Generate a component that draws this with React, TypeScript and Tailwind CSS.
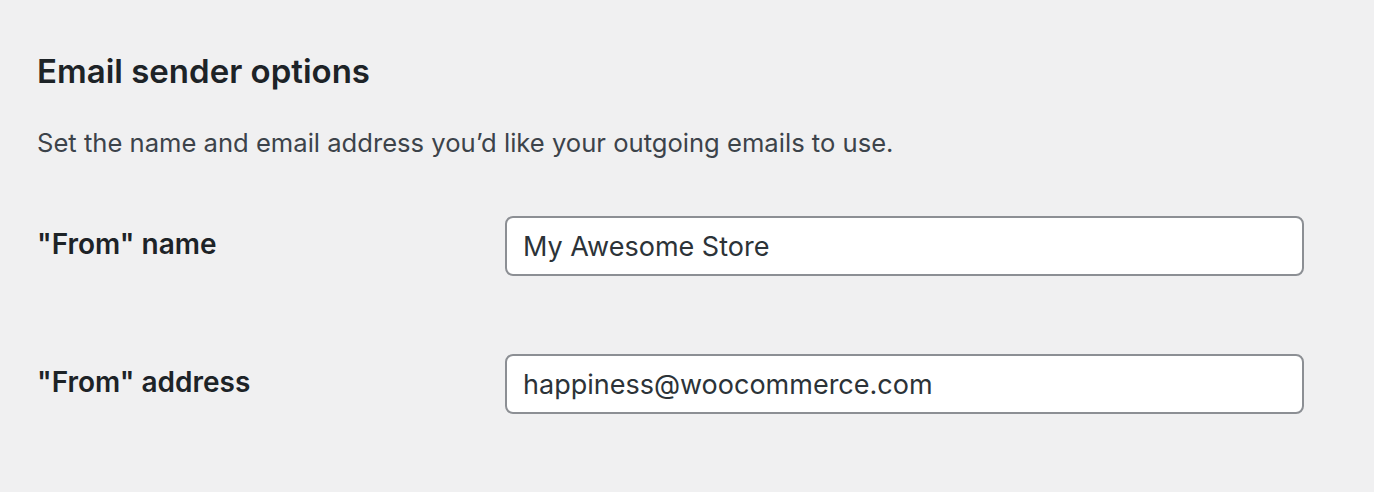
export default function App() {
  const font = { fontFamily: 'Inter, "Noto Sans", sans-serif' };
  return (
    <div className="w-[1374px] h-[492px] bg-[#f0f0f1] text-[#1d2327] pl-[37px] pt-[51px]" style={font}>
      <h2 className="text-[33px] font-semibold leading-[40px]">Email sender options</h2>
      <p className="text-[25.6px] leading-[36px] text-[#3c434a] mt-[34px]">
        Set the name and email address you’d like your outgoing emails to use.
      </p>
      <div className="mt-[55px] flex flex-col gap-[78px]">
        <div className="flex items-center">
          <label className="w-[468px] text-[28px] font-semibold mb-[4px]">"From" name</label>
          <input
            className="w-[799px] h-[60px] bg-white border-2 border-[#8c8f94] rounded-[8px] px-[16px] text-[27px] text-[#2c3338] outline-none"
            defaultValue="My Awesome Store"
          />
        </div>
        <div className="flex items-center">
          <label className="w-[468px] text-[28px] font-semibold mb-[4px]">"From" address</label>
          <input
            className="w-[799px] h-[60px] bg-white border-2 border-[#8c8f94] rounded-[8px] px-[16px] text-[27px] text-[#2c3338] outline-none"
            defaultValue="happiness@woocommerce.com"
          />
        </div>
      </div>
    </div>
  );
}
